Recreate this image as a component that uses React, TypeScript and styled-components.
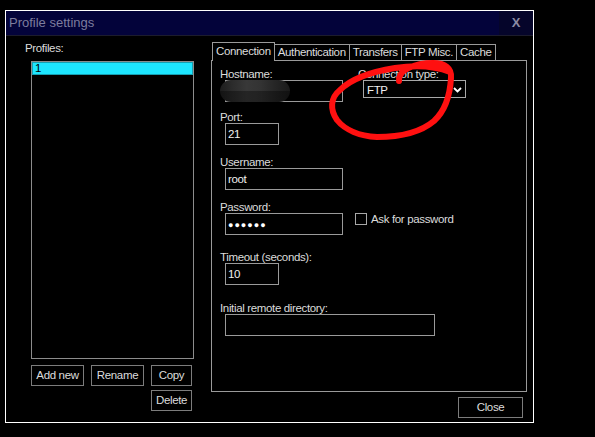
import styled, { createGlobalStyle } from "styled-components";

const GlobalStyle = createGlobalStyle`
  html, body {
    margin: 0;
    padding: 0;
    background: #000;
  }
  body {
    font-family: "Liberation Sans", Arial, sans-serif;
    font-size: 11.5px;
    letter-spacing: -0.35px;
    color: #dcdcdc;
  }
  #root {
    position: relative;
    width: 595px;
    height: 437px;
  }
`;

const Window = styled.div`
  position: relative;
  margin: 10px 0 0 5px;
  width: 529px;
  height: 413px;
  box-sizing: border-box;
  border: 1px solid #fff;
  background: #000;
  display: flex;
  flex-direction: column;
`;

const TitleBar = styled.div`
  height: 24px;
  flex: none;
  display: flex;
  align-items: stretch;
  background: #03033a;
  border-bottom: 1px solid #1c1c2c;
`;

const Title = styled.div`
  flex: 1;
  padding-left: 3px;
  line-height: 24px;
  font-size: 13px;
  letter-spacing: 0;
  color: #7d7d9e;
`;

const CloseX = styled.div`
  width: 34px;
  background: #05052a;
  color: #8a8aa2;
  font-weight: bold;
  font-size: 13px;
  line-height: 24px;
  text-align: center;
  letter-spacing: 0;
`;

const Body = styled.div`
  flex: 1;
  display: flex;
`;

const LeftCol = styled.div`
  width: 205px;
  flex: none;
  box-sizing: border-box;
  padding: 7px 0 0 19px;
`;

const Label = styled.div`
  line-height: 11px;
  height: 11px;
  white-space: nowrap;
  color: #dcdcdc;
`;

const ListBox = styled.div`
  margin: 7px 0 0 6px;
  width: 163px;
  height: 298px;
  box-sizing: border-box;
  border: 1px solid #8c8c8c;
`;

const ListItem = styled.div<{ $selected?: boolean }>`
  height: 13px;
  padding-left: 2px;
  box-sizing: border-box;
  color: ${(p) => (p.$selected ? "#000" : "#dcdcdc")};
  background: ${(p) => (p.$selected ? "#1de6ff" : "transparent")};
  border: 1px solid ${(p) => (p.$selected ? "#169fb2" : "transparent")};
  line-height: 11px;
`;

const ButtonGrid = styled.div`
  margin: 6px 0 0 6px;
  display: grid;
  grid-template-columns: 53px 53px 41px;
  column-gap: 7px;
  row-gap: 4px;
`;

const Button = styled.div<{ $col?: number }>`
  ${(p) => (p.$col ? `grid-column: ${p.$col};` : "")}
  height: 21px;
  box-sizing: border-box;
  border: 1px solid #7c7c7c;
  color: #dcdcdc;
  text-align: center;
  line-height: 19px;
  white-space: nowrap;
`;

const RightCol = styled.div`
  width: 316px;
  flex: none;
  padding-top: 6px;
  display: flex;
  flex-direction: column;
`;

const TabStrip = styled.div`
  display: flex;
  align-items: flex-end;
  height: 18px;
  margin-left: 1px;
  position: relative;
  z-index: 1;
`;

const Tab = styled.div<{ $active?: boolean }>`
  height: ${(p) => (p.$active ? "19px" : "16px")};
  margin-bottom: ${(p) => (p.$active ? "-1px" : "0")};
  box-sizing: border-box;
  padding: ${(p) => (p.$active ? "2px 3px 0" : "1px 3px 0")};
  border: 1px solid #9a9a9a;
  border-bottom: none;
  background: #000;
  color: #dcdcdc;
  line-height: 13px;
  white-space: nowrap;
  & + & {
    margin-left: -1px;
  }
`;

const Pane = styled.div`
  height: 332px;
  box-sizing: border-box;
  border: 1px solid #9a9a9a;
  padding: 8px 0 0 8px;
`;

const Row = styled.div<{ $mt?: number }>`
  display: flex;
  align-items: flex-start;
  margin-top: ${(p) => p.$mt ?? 0}px;
`;

const Field = styled.div<{ $mt?: number; $ml?: number }>`
  position: relative;
  margin-top: ${(p) => p.$mt ?? 0}px;
  margin-left: ${(p) => p.$ml ?? 0}px;
`;

const TextBox = styled.div<{ $w: number }>`
  margin-left: 5px;
  width: ${(p) => p.$w}px;
  height: 22px;
  box-sizing: border-box;
  border: 1px solid #9a9a9a;
  padding: 4px 2px 0;
  line-height: 13px;
  color: #f0f0f0;
`;

const Dots = styled.span`
  font-size: 9px;
  letter-spacing: 1px;
  line-height: 13px;
  color: #fff;
`;

const Smudge = styled.div`
  position: absolute;
  left: 0;
  top: 11px;
  width: 70px;
  height: 22px;
  border-radius: 11px;
  background:
    linear-gradient(180deg, rgba(0, 0, 0, 0) 50%, rgba(0, 0, 0, 0.35) 50%),
    linear-gradient(90deg, #1d1d1d 0%, #2c2c2c 18%, #383838 38%, #333 58%, #262626 78%, #1a1a1a 100%);
`;

const Select = styled.div`
  margin-left: 5px;
  width: 103px;
  height: 18px;
  box-sizing: border-box;
  border: 1px solid #a8a8a8;
  padding: 1px 3px 0;
  line-height: 14px;
  color: #f0f0f0;
  display: flex;
  justify-content: space-between;
  align-items: center;
`;

const Check = styled.div`
  width: 12px;
  height: 12px;
  box-sizing: border-box;
  border: 1px solid #a8a8a8;
  flex: none;
`;

const CheckRow = styled.label`
  margin: 11px 0 0 12px;
  display: flex;
  align-items: flex-start;
  gap: 4px;
  line-height: 12px;
  color: #dcdcdc;
`;

const CloseButton = styled(Button)`
  align-self: flex-end;
  margin: 5px 4px 0 0;
  width: 65px;
`;

const Scribble = styled.svg`
  position: absolute;
  left: 0;
  top: 0;
  pointer-events: none;
`;

const tabs = ["Connection", "Authentication", "Transfers", "FTP Misc.", "Cache"];

export default function App() {
  return (
    <>
      <GlobalStyle />
      <Window>
        <TitleBar>
          <Title>Profile settings</Title>
          <CloseX>X</CloseX>
        </TitleBar>
        <Body>
          <LeftCol>
            <Label>Profiles:</Label>
            <ListBox>
              <ListItem $selected>1</ListItem>
            </ListBox>
            <ButtonGrid>
              <Button>Add new</Button>
              <Button>Rename</Button>
              <Button>Copy</Button>
              <Button $col={3}>Delete</Button>
            </ButtonGrid>
          </LeftCol>
          <RightCol>
            <TabStrip>
              {tabs.map((t, i) => (
                <Tab key={t} $active={i === 0}>
                  {t}
                </Tab>
              ))}
            </TabStrip>
            <Pane>
              <Row>
                <Field>
                  <Label>Hostname:</Label>
                  <TextBox $w={118} />
                  <Smudge />
                </Field>
                <Field $ml={15}>
                  <Label>Connection type:</Label>
                  <Select>
                    <span>FTP</span>
                    <svg width="9" height="6" viewBox="0 0 9 6">
                      <polyline points="1,1 4.5,4.5 8,1" fill="none" stroke="#fff" strokeWidth="1.8" />
                    </svg>
                  </Select>
                </Field>
              </Row>
              <Field $mt={10}>
                <Label>Port:</Label>
                <TextBox $w={54}>21</TextBox>
              </Field>
              <Field $mt={12}>
                <Label>Username:</Label>
                <TextBox $w={118}>root</TextBox>
              </Field>
              <Row $mt={12}>
                <Field>
                  <Label>Password:</Label>
                  <TextBox $w={118}>
                    <Dots>●●●●●●</Dots>
                  </TextBox>
                </Field>
                <CheckRow>
                  <Check />
                  Ask for password
                </CheckRow>
              </Row>
              <Field $mt={17}>
                <Label>Timeout (seconds):</Label>
                <TextBox $w={54}>10</TextBox>
              </Field>
              <Field $mt={18}>
                <Label>Initial remote directory:</Label>
                <TextBox $w={210} />
              </Field>
            </Pane>
            <CloseButton>Close</CloseButton>
          </RightCol>
        </Body>
      </Window>
      <Scribble width="595" height="437" viewBox="0 0 595 437">
        <path
          d="M399,71 C398,60 415,53 433,53 C445,53 452,58 451,68 C450,85 446,100 434,111 C421,122 400,127 377,127 C360,126 345,120 337,110 C330,100 330,88 340,80 C350,70 370,62 395,58 C415,55 435,56 450,62"
          fill="none"
          stroke="#ff1010"
          strokeWidth="6"
          strokeLinecap="round"
          strokeLinejoin="round"
        />
      </Scribble>
    </>
  );
}
